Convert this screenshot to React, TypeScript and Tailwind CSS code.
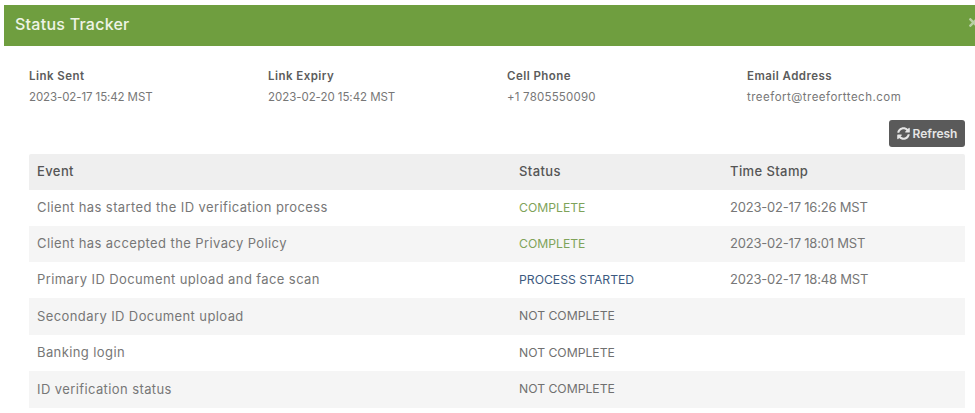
import { FaSyncAlt, FaTimes } from 'react-icons/fa';

const info = [
  { label: 'Link Sent', value: '2023-02-17 15:42 MST', track: 'tracking-[-0.1px]' },
  { label: 'Link Expiry', value: '2023-02-20 15:42 MST', track: 'tracking-[-0.05px]' },
  { label: 'Cell Phone', value: '+1 7805550090', track: 'tracking-[0.2px]' },
  { label: 'Email Address', value: 'treefort@treeforttech.com', track: 'tracking-[0.48px]' },
];

const rows = [
  { event: 'Client has started the ID verification process', status: 'COMPLETE', color: 'text-[#7fa35a]', time: '2023-02-17 16:26 MST', h: 'h-[36px]' },
  { event: 'Client has accepted the Privacy Policy', status: 'COMPLETE', color: 'text-[#7fa35a]', time: '2023-02-17 18:01 MST', h: 'h-[36px]' },
  { event: 'Primary ID Document upload and face scan', status: 'PROCESS STARTED', color: 'text-[#3d5a80]', time: '2023-02-17 18:48 MST', h: 'h-[36px]' },
  { event: 'Secondary ID Document upload', status: 'NOT COMPLETE', color: 'text-[#707070]', time: '', h: 'h-[37px]' },
  { event: 'Banking login', status: 'NOT COMPLETE', color: 'text-[#707070]', time: '', h: 'h-[36px]' },
  { event: 'ID verification status', status: 'NOT COMPLETE', color: 'text-[#707070]', time: '', h: 'h-[37px]' },
];

export default function App() {
  return (
    <div className="h-[413px] w-[975px] overflow-hidden bg-white pt-[5px] pl-[4px] font-['Inter','Liberation_Sans',sans-serif]">
      {/* header */}
      <div className="flex h-[41px] items-center justify-between bg-[#6f9e3f] pl-[11px]">
        <span className="mb-[3px] text-[16px] font-medium tracking-[0.25px] text-[#eef4e6]">Status Tracker</span>
        <FaTimes className="mr-[-5px] mb-[6px] text-[13px] text-[#b9cfa5]" />
      </div>

      {/* link details */}
      <div className="mt-[22px] grid grid-cols-[239px_239px_240px_auto] pl-[25px]">
        {info.map((item) => (
          <div key={item.label}>
            <div className="text-[11.5px] leading-[16px] font-semibold tracking-[0.45px] text-[#5c5c5c]">{item.label}</div>
            <div className={`mt-[5px] text-[11.5px] leading-[16px] text-[#777777] ${item.track}`}>{item.value}</div>
          </div>
        ))}
      </div>

      <div className="mt-[15px] mr-[10px] flex justify-end">
        <button className="flex h-[27px] w-[76px] items-center justify-center gap-[3px] rounded-[3px] bg-[#5a5a5a] text-[12px] font-semibold text-[#e6e6e6]">
          <FaSyncAlt className="text-[13px]" />
          Refresh
        </button>
      </div>

      {/* events table */}
      <div className="mt-[7px] mr-[10px] ml-[25px] text-[13px]">
        <div className="flex h-[36px] items-center rounded-t-[2px] bg-[#efefef] font-medium tracking-[0.4px] text-[#555555]">
          <div className="w-[481px] pl-[8px]">Event</div>
          <div className="w-[211px] pl-[9px]">Status</div>
          <div className="flex-1 pl-[9px]">Time Stamp</div>
        </div>
        {rows.map((row, i) => (
          <div key={row.event} className={`flex items-center ${row.h} ${i % 2 === 1 ? 'bg-[#f5f5f5]' : 'bg-white'}`}>
            <div className="w-[481px] pl-[8px] tracking-[0.4px] text-[#777777]">{row.event}</div>
            <div className={`w-[211px] pl-[9px] text-[12.2px] ${row.color}`}>{row.status}</div>
            <div className="flex-1 pl-[9px] tracking-[-0.2px] text-[#777777]">{row.time}</div>
          </div>
        ))}
      </div>
    </div>
  );
}
